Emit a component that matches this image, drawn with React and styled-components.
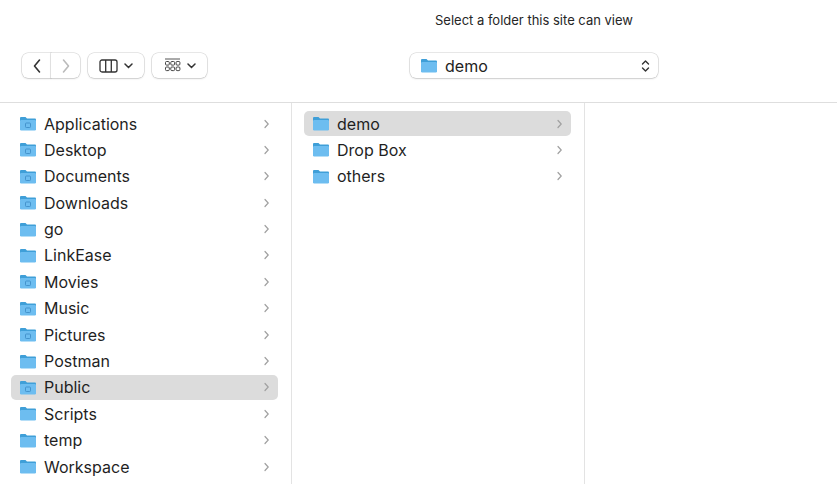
import React from "react";
import styled, { createGlobalStyle } from "styled-components";

const G = createGlobalStyle`
  body{margin:0;background:#fff;font-family:"Inter","Liberation Sans",sans-serif;color:#222;}
`;
const Page = styled.div`width:837px;height:484px;overflow:hidden;display:flex;flex-direction:column;`;
const Title = styled.div`height:40px;display:flex;align-items:center;justify-content:center;padding-left:231px;font-size:13px;color:#262626;`;
const Toolbar = styled.div`height:63px;display:flex;align-items:flex-start;padding:13px 0 0 22px;border-bottom:1px solid #dedede;box-sizing:border-box;`;
const Btn = styled.div`height:25px;width:${p=>p.w}px;margin-right:${p=>p.mr}px;border-radius:6px;background:#fff;box-shadow:0 0 0 0.5px rgba(0,0,0,0.18),0 1px 2px rgba(0,0,0,0.12);display:flex;align-items:center;justify-content:center;gap:6px;box-sizing:border-box;`;
const Seg = styled.div`display:flex;margin-right:8px;`;
const SegBtn = styled(Btn)`margin-right:0;border-radius:${p=>p.left?"6px 0 0 6px":"0 6px 6px 0"};`;
const Popup = styled(Btn)`margin-left:auto;margin-right:179px;width:248px;justify-content:flex-start;padding:0 8px 0 10px;font-size:16px;gap:7px;`;
const Cols = styled.div`flex:1;display:flex;`;
const Col = styled.div`width:${p=>p.w}px;border-right:1px solid #e3e3e3;padding:8px ${p=>p.pr}px 0 ${p=>p.pl}px;box-sizing:border-box;`;
const Row = styled.div`height:25px;margin-bottom:1.4px;display:flex;align-items:center;padding:0 8px 0 8px;border-radius:5px;background:${p=>p.sel?"#dcdcdc":"transparent"};font-size:16px;color:#1f1f1f;`;
const Name = styled.span`margin-left:7px;flex:1;`;
const Chev = styled.span`color:#a8a8a8;font-size:13px;display:flex;`;

const Folder = ({glyph}) => (
  <svg width="18" height="15" viewBox="0 0 18 15">
    <path d="M1 2.2C1 1.5 1.5 1 2.2 1H6.5L8 2.6H15.8C16.5 2.6 17 3.1 17 3.8V5H1Z" fill="#3f9fd8"/>
    <rect x="1" y="4" width="16" height="10.5" rx="1.2" fill="#6dbdf0"/>
    {glyph && <rect x="6.5" y="7" width="5" height="4.5" rx="0.8" fill="none" stroke="#3f8fc8" strokeWidth="0.9"/>}
  </svg>
);
const Chevron = ()=>(<svg width="7" height="10" viewBox="0 0 7 10"><path d="M2 1.5L5.2 5 2 8.5" fill="none" stroke="#a0a0a0" strokeWidth="1.2" strokeLinecap="round"/></svg>);

const left=[["Applications",1],["Desktop",1],["Documents",1],["Downloads",1],["go"],["LinkEase"],["Movies",1],["Music",1],["Pictures",1],["Postman"],["Public",1,1],["Scripts"],["temp"],["Workspace"]];
const mid=[["demo",0,1],["Drop Box"],["others"]];

export default function App(){
  return <Page><G/>
    <Title>Select a folder this site can view</Title>
    <Toolbar>
      <Seg>
        <SegBtn left w={29}><svg width="10" height="16" viewBox="0 0 10 16"><path d="M7.5 2L2.5 8l5 6" fill="none" stroke="#333" strokeWidth="1.6" strokeLinecap="round" strokeLinejoin="round"/></svg></SegBtn>
        <SegBtn w={29}><svg width="10" height="16" viewBox="0 0 10 16"><path d="M2.5 2l5 6-5 6" fill="none" stroke="#bbb" strokeWidth="1.6" strokeLinecap="round" strokeLinejoin="round"/></svg></SegBtn>
      </Seg>
      <Btn w={56} mr={8}>
        <svg width="19" height="14" viewBox="0 0 19 14"><rect x="1" y="1" width="17" height="12" rx="2" fill="none" stroke="#333" strokeWidth="1.3"/><path d="M6.7 1v12M12.3 1v12" stroke="#333" strokeWidth="1.3"/></svg>
        <svg width="9" height="6" viewBox="0 0 9 6"><path d="M1 1l3.5 3.5L8 1" fill="none" stroke="#333" strokeWidth="1.5" strokeLinecap="round"/></svg>
      </Btn>
      <Btn w={55} mr={0}>
        <svg width="17" height="15" viewBox="0 0 17 15"><path d="M1 1h15" stroke="#555" strokeWidth="1"/>{[0,1].map(r=>[0,1,2].map(c=><rect key={r+"-"+c} x={1.5+c*5.3} y={3.5+r*5.5} width="3.8" height="3.6" rx="1" fill="none" stroke="#444" strokeWidth="1"/>))}</svg>
        <svg width="9" height="6" viewBox="0 0 9 6"><path d="M1 1l3.5 3.5L8 1" fill="none" stroke="#333" strokeWidth="1.5" strokeLinecap="round"/></svg>
      </Btn>
      <Popup w={248} mr={179}>
        <Folder/><span style={{flex:1}}>demo</span>
        <svg width="9" height="14" viewBox="0 0 9 14"><path d="M1.5 5L4.5 2l3 3M1.5 9l3 3 3-3" fill="none" stroke="#333" strokeWidth="1.4" strokeLinecap="round" strokeLinejoin="round"/></svg>
      </Popup>
    </Toolbar>
    <Cols>
      <Col w={292} pl={11} pr={13}>
        {left.map(([n,g,s])=><Row key={n} sel={s}><Folder glyph={g}/><Name>{n}</Name><Chev><Chevron/></Chev></Row>)}
      </Col>
      <Col w={293} pl={12} pr={13}>
        {mid.map(([n,g,s])=><Row key={n} sel={s}><Folder/><Name>{n}</Name><Chev><Chevron/></Chev></Row>)}
      </Col>
    </Cols>
  </Page>;
}
